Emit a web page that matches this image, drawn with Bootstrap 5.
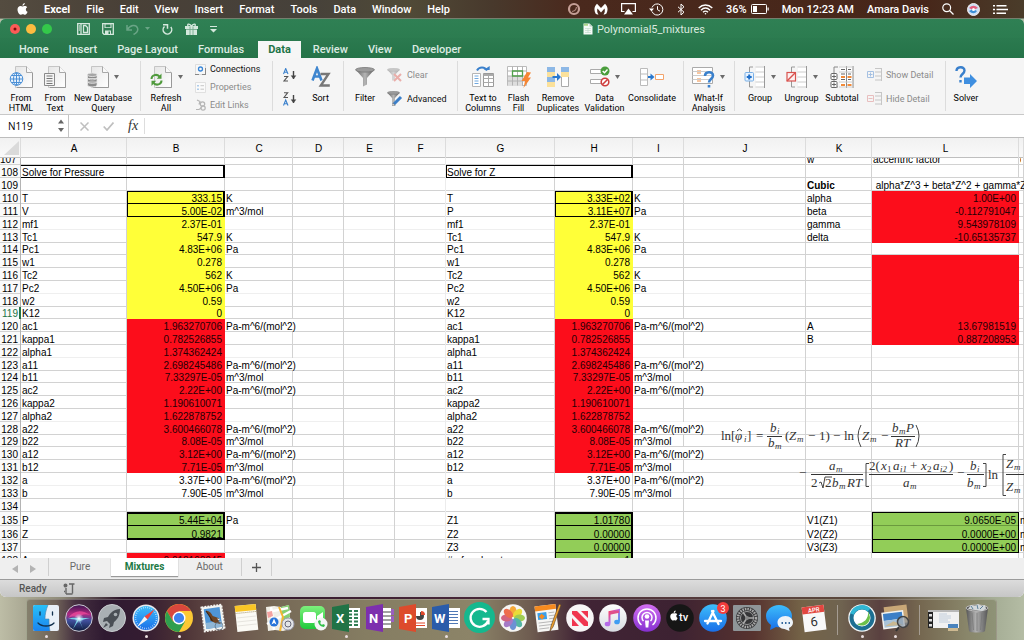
<!DOCTYPE html>
<html lang="en">
<head>
<meta charset="utf-8">
<meta name="viewport" content="width=device-width, initial-scale=1">
<title>Polynomial5_mixtures</title>
<link href="https://cdn.jsdelivr.net/npm/bootstrap@5.3.0/dist/css/bootstrap.min.css" rel="stylesheet">
<style>
:root{--ui:Roboto,Inter,sans-serif;--cell:"Liberation Sans",Arial,sans-serif}
body{font-family:var(--ui);font-size:11px;line-height:1;color:#111;background:linear-gradient(90deg,#bdbda6 0,#8e8a78 6%,#2a1227 12%,#4b2a3a 50%,#5c4a3c 85%,#a5ad95 97%,#b4bca4)}
button{font-family:inherit;border:0;background:none;padding:0;color:inherit}
svg{display:block;flex:none}
a{color:inherit;text-decoration:none}
/* menu bar */
.menubar{height:19px;color:#fff;font-weight:500;background:linear-gradient(90deg,#544c40 0,#494037 12%,#46413a 30%,#504a37 40%,#48392c 48%,#4a291d 56%,#472619 90%,#4a3c2a);padding:0 16px 0 17px;border-bottom:1px solid #75806f}
.menus{gap:16px}
.status-items{gap:13px}
/* title and ribbon tabs */
.app-window{background:#fff;border-radius:5px 5px 6px 6px;overflow:hidden;min-height:0}
.titlebar{height:19px;background:linear-gradient(#2f8054,#2c7c50);color:#d9e9df;padding-top:1px}
.quick{width:264px;padding-left:10px;gap:25px}
.lights{gap:6px}
.light{width:10px;height:10px;border-radius:50%}
.light.close-dot{background:#fc5b57}
.light.mini-dot{background:#fdbc40}
.light.zoom-dot{background:#34c84a}
.quick-icons{gap:12px}
.undo{gap:6px}
.ribbon-tabs{height:20px;background:linear-gradient(#2b7a4f,#257348);color:#dcebe2;padding-left:9px;font-weight:500}
.ribbon-tabs a{padding:0 10px;height:17px;line-height:17px}
.ribbon-tabs a.current{background:#f6f6f6;color:#217346;font-weight:700;margin:0 2px 0 4px}
/* ribbon */
.ribbon{display:grid;height:57px;background:#f5f5f5;border-bottom:1px solid #c8c8c8;padding-left:3px;font-size:9px;line-height:10px;
grid-template-columns:36px 32px 64px 10px 42px 80px 10px 26px 35px 10px 34px 70px 10px 42px 29px 50px 43px 52px 10px 41px 10px 42px 41px 40px 78px 10px 32px}
.tool{display:flex;flex-direction:column;align-items:center;padding-top:8px;text-align:center;white-space:nowrap;color:#000}
.tool .pic{display:flex;align-items:center;gap:5px;height:22px;margin-bottom:5px}
.divide{width:1px;height:50px;margin:3px auto 0;background:#dcdcdc}
.stack{display:flex;flex-direction:column;padding:2px 0 0 8px}
.stack.two{padding-top:6px;padding-left:5px}
.stack button{display:flex;align-items:center;gap:4px;height:18px;white-space:nowrap}
.stack.two button{height:21px;margin-bottom:3px}
.off{color:#8b8b8b}
.off svg{opacity:.5}
.sorts{display:flex;flex-direction:column;align-items:center;gap:10px;padding-top:10px}
/* formula bar */
.formula{height:23px;border-bottom:1px solid #bdbdbd;background:#fff}
.namebox{width:69px;border-right:1px solid #c4c4c4;gap:4px}
.namebox input{width:53px;border:0;padding:0 0 0 8px;font:10px/14px "Open Sans",sans-serif;outline:0;background:none}
.formula-buttons{gap:14px;padding:0 6px 0 11px}
.fx{font:italic 14px/16px "Liberation Serif",serif;color:#333}
.entry{border:0;outline:0;background:none;font:10px/14px var(--cell);border-left:1px solid #ddd}
/* grid */
.sheet{min-height:0;overflow:hidden;position:relative;font-family:var(--cell);font-size:10px;line-height:11px}
.cells{table-layout:fixed;border-collapse:separate;border-spacing:0;width:100%;min-width:1024px;color:#000}
.c-head{width:21px}.c-a{width:106px}.c-b{width:98px}.c-c{width:68px}.c-slim{width:51px}.c-g{width:109px}.c-h{width:78px}.c-j{width:122px}.c-k{width:66px}.c-l{width:147px}
.cells td,.cells tbody th{--t:0px;--b:0px;--l:0px;--r:0px;--gx:#d2d2d2;--gy:#d2d2d2;padding:0 3px 0 1px;height:13px;vertical-align:bottom;white-space:nowrap;font-weight:400;
box-shadow:inset 0 var(--t) #000,inset 0 calc(0px - var(--b)) #000,inset var(--l) 0 #000,inset calc(0px - var(--r)) 0 #000,inset -1px 0 var(--gx),inset 0 -1px var(--gy)}
.cells thead th{height:20px;font-weight:400;text-align:center;vertical-align:middle;padding:0;background:linear-gradient(#f1f1f1,#fafafa);box-shadow:inset -1px 0 #dcdcdc,inset 0 -1px #bfbfbf}
.cells tbody th{--gx:#b4b4b4;background:#fafafa;text-align:right;padding:0 3px 0 0}
.cells tbody th.active{color:#217346;box-shadow:inset -2px 0 #217346}
.cells tr.short>*{height:12px}
.cells tr.tall>*{height:14px}
.cells .faint td{--gy:#efefef}
.cells tr.cut>*{height:7px;overflow:hidden}
.cut div{height:7px;display:flex;align-items:flex-end;overflow:hidden}
.cells td.num{text-align:right}
.cells td:nth-child(7){--gx:#ececec}
.cells tr td.yel{background:#ffff38;--gx:#ffff38;--gy:#ffff38}
.cells tr td.red{background:#fc0d1b;--gx:#fc0d1b;--gy:#fc0d1b;color:#260004}
.cells tr td.grn{background:#92cd58;--gx:#92cd58;--gy:#92cd58}
.cells tr td.mid{--gy:#6b9a3e}
.cells td.t1{--t:1px}.cells td.t2{--t:2px}.cells td.b1{--b:1px}.cells td.b2{--b:2px}
.cells td.l1{--l:1px}.cells td.r1{--r:1px}.cells td.r2{--r:2px}
.cells td.spill{--gx:transparent}
.equation{position:absolute;left:720px;top:284px;font-family:"Liberation Serif",serif;font-size:13px;font-style:italic}
.equation .up{font-style:normal}
.equation .sub{font-size:9px}
/* sheet tabs and status */
.sheettabs{height:22px;background:#efefef;border-bottom:1px solid #9b9b9b;font-size:10px;font-weight:500;color:#6a6a6a}
.sheettabs button{height:18px}
.arrows{padding:7px 12px 0 12px;gap:12px}
.sheettabs .arrows button{height:8px}
.sheettabs .tab{width:63px;border-left:1px solid #cfcfcf}
.sheettabs .tab.current{width:67px;background:#fff;color:#1e7a46;font-weight:700;border:0;box-shadow:0 1px 1px #999}
.sheettabs .tab.last-tab{border:0}
.sheettabs .add{width:31px;border:solid #cfcfcf;border-width:0 1px}
.statusbar{height:17px;background:linear-gradient(#dcdcdc,#c6c6c6);color:#555;font-size:10px;font-weight:500;padding-left:19px}
/* dock */
.dock{height:41px;margin:2px 27px 0 26px;padding:0 2px;border:1px solid rgba(200,200,190,.35);border-bottom:0;border-radius:4px 4px 0 0;
background:linear-gradient(90deg,#85806d 0,#6f6258 3%,#453040 5%,#2f1a31 8%,#341c31 12%,#4c3236 16%,#6a544b 21%,#776a57 26%,#857d62 35%,#8c8468 46%,#6e5c50 52%,#412435 57%,#3d2232 67%,#57332f 75%,#746347 80%,#6f6350 84%,#5a4140 88%,#74664f 92%,#89866a 97%,#8e9377)}
.dock a{flex:1 1 0;min-width:0;height:39px;padding-top:4px;position:relative}
.dock a svg{margin:0 auto;overflow:visible}
.dock a.open::after{content:"";position:absolute;left:calc(50% - 1px);bottom:1px;width:3px;height:3px;border-radius:50%;background:#eadfe0}
.dock .bar{width:15px;height:30px;margin-top:5px;background:linear-gradient(90deg,transparent 7px,#a59c92 7px,#a59c92 8px,transparent 8px)}
</style>
</head>
<body class="d-flex flex-column vh-100 overflow-hidden m-0">

<svg width="0" height="0" class="position-absolute" aria-hidden="true">
  <defs>
    <linearGradient id="gPaper" x2="1" y2="1"><stop offset="0" stop-color="#e6e6e6"/><stop offset="1" stop-color="#fff"/></linearGradient>
    <linearGradient id="gFunnel"><stop offset="0" stop-color="#666"/><stop offset=".5" stop-color="#b5b5b5"/><stop offset="1" stop-color="#5a5a5a"/></linearGradient>
    <linearGradient id="gGlass" x2="0" y2="1"><stop offset="0" stop-color="#fdfdfd"/><stop offset="1" stop-color="#d9dce2"/></linearGradient>
    <linearGradient id="gBlue" x2="0" y2="1"><stop offset="0" stop-color="#3dbdfb"/><stop offset="1" stop-color="#1a6fe8"/></linearGradient>
    <linearGradient id="gGreen" x2="0" y2="1"><stop offset="0" stop-color="#7df07c"/><stop offset="1" stop-color="#1fc93b"/></linearGradient>
    <linearGradient id="gPurple" x2="0" y2="1"><stop offset="0" stop-color="#d370f2"/><stop offset="1" stop-color="#8530d0"/></linearGradient>
    <linearGradient id="gNote" x2="1" y2="1"><stop offset="0" stop-color="#fb3b62"/><stop offset=".5" stop-color="#b56be8"/><stop offset="1" stop-color="#38a7f5"/></linearGradient>
    <linearGradient id="gFinder" x2="0" y2="1"><stop offset="0" stop-color="#28c0f8"/><stop offset="1" stop-color="#1b84ee"/></linearGradient>
    <linearGradient id="gSiri" x2="0" y2="1"><stop offset="0" stop-color="#3a1450"/><stop offset=".35" stop-color="#b02a80"/><stop offset=".6" stop-color="#3f4f9c"/><stop offset="1" stop-color="#0c1a38"/></linearGradient>
    <radialGradient id="gGlow"><stop offset="0" stop-color="#fff"/><stop offset="1" stop-color="#9fe4ff" stop-opacity="0"/></radialGradient>
    <linearGradient id="gTrash"><stop offset="0" stop-color="#555"/><stop offset=".45" stop-color="#b0b0b0"/><stop offset="1" stop-color="#555"/></linearGradient>
    <symbol id="paper" viewBox="0 0 18 22"><path d="M.5.5h11l6 6v15H.5z" fill="url(#gPaper)" stroke="#c5c5c5"/><path d="M11.5.5v6h6" fill="#f9f9f9" stroke="#a8a8a8"/><path d="M17.5 7v14.500H2" fill="none" stroke="#999"/></symbol>
    <symbol id="caret" viewBox="0 0 5 4"><path d="M0 0h5L2.500 4z" fill="#6b6b6b"/></symbol>
    <symbol id="funnel" viewBox="0 0 20 20"><path d="M1 3l7 8v8.500l4-2V11l7-8z" fill="url(#gFunnel)"/><ellipse cx="10" cy="2.800" rx="9.500" ry="2.300" fill="#9b9b9b" stroke="#777" stroke-width=".8"/></symbol>
  </defs>
</svg>

<header class="menubar d-flex align-items-center flex-shrink-0">
  <nav class="menus d-flex align-items-center" aria-label="Menu bar">
    <a href="#" aria-label="Apple"><svg width="11" height="13" viewBox="0 0 11 13"><path d="M7.800 0c.1 1.300-1 2.700-2.300 2.700C5.300 1.400 6.500.2 7.800 0zM5.500 3.500c.5 0 1.200-.6 2.300-.6 1 0 1.900.5 2.400 1.300-1.900 1.100-1.700 3.800.4 4.600-.4 1.100-1.500 3-2.600 3-.8 0-1.200-.5-2.200-.5s-1.400.5-2.200.5C2.200 11.800.5 9 .5 6.600.5 4.200 2 3 3.500 3c.9 0 1.500.5 2 .5z" fill="#fff"/></svg></a>
    <a href="#" class="fw-bold">Excel</a><a href="#">File</a><a href="#">Edit</a><a href="#">View</a><a href="#">Insert</a><a href="#">Format</a><a href="#">Tools</a><a href="#">Data</a><a href="#">Window</a><a href="#">Help</a>
  </nav>
  <div class="status-items d-flex align-items-center ms-auto">
    <svg width="14" height="14" viewBox="0 0 14 14" fill="none"><circle cx="7" cy="7" r="5" stroke="#c59f96" stroke-width="2.200"/><path d="M5 9.500Q9 9 9.500 5" stroke="#a98278" stroke-width="1.200"/></svg>
    <svg width="14" height="12" viewBox="0 0 14 12"><path d="M1.500 10.500C-.5 6.500.5 3 3 .8L7 5l4-4.200c2.500 2.200 3.500 5.700 1.500 9.700-1 1-2.500 1.300-3 1 1.500-2 1.500-4 1-6L7 9.500 3.500 5.500c-.5 2-.5 4 1 6-1 .3-2.200 0-3-1z" fill="#fff"/></svg>
    <svg width="15" height="12" viewBox="0 0 15 12"><path d="M3.500 8.500H.6V.6h13.800v7.900h-2.900" fill="none" stroke="#fff" stroke-width="1.200"/><path d="M7.500 5.500L12 11.500H3z" fill="#fff"/></svg>
    <svg width="15" height="13" viewBox="0 0 15 13" fill="none" stroke="#fff"><path d="M3 8.500A5.600 5.600 0 1 0 3 4.500" /><path d="M8.500 3.200v3.500l2.500 1.500"/><path d="M0 5.500h5L2.500 8.500z" fill="#fff" stroke="none"/></svg>
    <svg width="8" height="13" viewBox="0 0 8 13" fill="none" stroke="#fff"><path d="M1 3.800l6 5.400L4 12V1l3 2.800L1 9.200"/></svg>
    <svg width="15" height="11" viewBox="0 0 15 11" fill="none" stroke="#fff" stroke-width="1.400"><path d="M.7 3.900c4-3.900 9.600-3.900 13.600 0M2.900 6.200c2.800-2.600 6.400-2.600 9.200 0M5 8.300c1.500-1.400 3.500-1.400 5 0"/><circle cx="7.500" cy="9.800" r=".8" fill="#fff" stroke="none"/></svg>
    <div class="d-flex align-items-center gap-1"><span>36%</span>
    <svg width="18" height="10" viewBox="0 0 18 10"><rect x=".5" y=".5" width="15" height="9" rx="1" fill="none" stroke="#fff"/><path d="M2 2h4v6H2zM16.500 3.500h1.200v3h-1.200z" fill="#fff"/></svg></div>
    <span>Mon 12:23 AM</span><span>Amara Davis</span>
    <svg width="12" height="12" viewBox="0 0 12 12" fill="none" stroke="#fff" stroke-width="1.200"><circle cx="4.700" cy="4.700" r="3.900"/><path d="M7.500 7.500l4 4"/></svg>
    <svg width="13" height="13" viewBox="0 0 13 13"><circle cx="6.500" cy="6.500" r="6" fill="#cfe1f5" stroke="#f0e8ea"/><path d="M2 5c3-3 6-3 9 0L6 7z" fill="#e5607f"/><path d="M2 8c3 3 6 3 8 0L6 6z" fill="#3d8fd8"/><circle cx="6.500" cy="6.500" r="1.500" fill="#fff"/></svg>
    <svg width="15" height="9" viewBox="0 0 15 9"><path d="M0 0h2v1.500H0zM3.500 0h10v1.500h-10zM0 3.700h2v1.500H0zM3.500 3.700H15v1.500H3.500zM0 7.400h2v1.500H0zM3.500 7.400H13v1.500H3.500z" fill="#fff"/></svg>
  </div>
</header>

<main class="app-window d-flex flex-column flex-grow-1">
  <div class="titlebar d-flex align-items-center flex-shrink-0">
    <div class="quick d-flex align-items-center flex-shrink-0">
      <div class="lights d-flex">
        <button class="light close-dot" aria-label="Close"><svg width="10" height="10"><circle cx="5" cy="5" r="1.500" fill="#7a0c0c"/></svg></button>
        <button class="light mini-dot" aria-label="Minimise"></button>
        <button class="light zoom-dot" aria-label="Zoom"></button>
      </div>
      <div class="quick-icons d-flex align-items-center">
        <svg width="13" height="12" viewBox="0 0 13 12" fill="none" stroke="#d5e8dd" stroke-width="1.300"><path d="M.7.7h11.600v10.600H.7zM4 1v10"/><path d="M1.800 3h1M1.800 5h1M1.800 7h1" /><path d="M6.500 2.500h2L10.500 4.500v5h-4z"/></svg>
        <svg width="12" height="12" viewBox="0 0 12 12"><path d="M.7.7h10.600v10.600H2L.7 10z" fill="none" stroke="#d5e8dd" stroke-width="1.300"/><path d="M3 7.500h6V11H3zM2.500 1h7v4h-7z" fill="#d5e8dd"/><path d="M3.500 1.500h5v2.800h-5zM6.500 8.500H8V11H6.500z" fill="#2d7d52"/></svg>
        <div class="undo d-flex align-items-center"><svg width="13" height="11" viewBox="0 0 13 11" fill="none" stroke="#6aa586" stroke-width="1.500"><path d="M1 1v5h5M1.500 5.500C4 1 10 0 11.500 4c1 3-1 5-4 6.500"/></svg><svg width="5" height="4" viewBox="0 0 5 4"><path d="M0 0h5L2.500 3z" fill="#6aa586"/></svg></div>
        <svg width="11" height="12" viewBox="0 0 11 12" fill="none" stroke="#d5e8dd" stroke-width="1.500"><path d="M2.500 3.500A4.300 4.300 0 1 0 8.800 4M1 1.800h4.500v4"/></svg>
        <svg width="13" height="12" viewBox="0 0 13 12"><path d="M0 3h13v3H0zM1 6.500h11V12H1z" fill="#d5e8dd"/><path d="M3 3C2 1 4 0 6.500 3 9 0 11 1 10 3" fill="none" stroke="#d5e8dd" stroke-width="1.400"/><path d="M5 3.500V12M8 3.500V12" stroke="#68a384" stroke-width=".8"/></svg>
        <svg width="7" height="7" viewBox="0 0 7 7"><path d="M0 0h7v1H0zM0 3h7L3.500 6.500z" fill="#d5e8dd"/></svg>
      </div>
    </div>
    <div class="flex-grow-1 d-flex justify-content-center align-items-center gap-1">
      <svg width="10" height="12" viewBox="0 0 10 12"><path d="M.5.5h6l3 3v8h-9z" fill="#f5faf7"/><path d="M6.500.5v3h3" fill="#b8cfc2"/><path d="M2 5.500h6M2 7.500h6M2 9.500h6M5 5v5" stroke="#c3dccf" stroke-width=".7"/><path d="M1 .8h4v2H1z" fill="#a9d58a"/></svg>
      <span>Polynomial5_mixtures</span>
    </div>
  </div>
  <nav class="ribbon-tabs d-flex align-items-end flex-shrink-0" aria-label="Ribbon tabs">
    <a href="#">Home</a><a href="#">Insert</a><a href="#">Page Layout</a><a href="#">Formulas</a><a href="#" class="current" aria-current="page">Data</a><a href="#">Review</a><a href="#">View</a><a href="#">Developer</a>
  </nav>

  <div class="ribbon flex-shrink-0" role="toolbar" aria-label="Data">
    <button class="tool"><span class="pic"><svg width="24" height="22"><use href="#paper" x="6" width="18" height="22"/><g fill="#eaf3fc" stroke="#4a8fd6"><circle cx="7.500" cy="13" r="6.300"/><ellipse cx="7.500" cy="13" rx="3" ry="6.300" fill="none"/><path d="M1.200 13h12.600M2.500 9.500h10M2.500 16.500h10M7.500 6.700v12.600" fill="none"/></g></svg></span>From<br>HTML</button>
    <button class="tool"><span class="pic"><svg width="22" height="22"><use href="#paper" x="4" width="18" height="22"/><path d="M.5 7.500h10v12H.5z" fill="#f4f4f4" stroke="#8b8b8b"/><path d="M2.500 10h6M2.500 12.500h6M2.500 15h6M2.500 17.500h6" stroke="#777"/></svg></span>From<br>Text</button>
    <button class="tool"><span class="pic"><svg width="22" height="22"><use href="#paper" x="4" width="18" height="22"/><g fill="#8a8a8a" stroke="#e9e9e9" stroke-width=".8"><path d="M.5 16v3c0 2.500 9.500 2.500 9.500 0v-3zM.5 12.500v3c0 2.500 9.500 2.500 9.500 0v-3zM.5 9v3c0 2.500 9.500 2.500 9.500 0V9z"/><ellipse cx="5.200" cy="8.800" rx="4.800" ry="1.800" fill="#a5a5a5"/></g></svg><svg width="5" height="4"><use href="#caret"/></svg></span>New Database<br>Query</button>
    <i class="divide"></i>
    <button class="tool"><span class="pic"><svg width="23" height="22"><use href="#paper" x="4" width="18" height="22"/><g fill="none" stroke="#4f9a3c" stroke-width="2"><path d="M1.500 13c0-4 5-5.500 8-2.500"/><path d="M11.500 14.500c0 4-5 5.500-8 2.500"/></g><path d="M11.500 7.500v5.300H6.800zM1.500 20v-5.300h4.700z" fill="#4f9a3c"/></svg><svg width="5" height="4"><use href="#caret"/></svg></span>Refresh<br>All</button>
    <div class="stack">
      <button><svg width="11" height="11" viewBox="0 0 11 11"><path d="M.5.500h10v10H.5z" fill="#f7f7f7" stroke="#ddd"/><circle cx="5.500" cy="5" r="2" fill="none" stroke="#3a87d8" stroke-width="1.300"/><path d="M0 10.500h4M7 10.500h4M10.500 4v6" stroke="#888"/></svg>Connections</button>
      <button class="off"><svg width="11" height="11" viewBox="0 0 11 11"><path d="M.5.500h10v10H.5z" fill="#fff" stroke="#ccc"/><path d="M2 3h2v1.500H2zM2 6.500h2V8H2z" fill="#6aa5e0"/><path d="M5.500 3.700H9M5.500 7.200H9" stroke="#999"/></svg>Properties</button>
      <button class="off"><svg width="11" height="12" viewBox="0 0 11 12" fill="none" stroke="#777" stroke-width="1.200"><path d="M2 1l3 1.500-1 3M1 10.500h3l3-2"/><circle cx="7.500" cy="5" r="2.200"/><circle cx="8" cy="9" r="2.200"/></svg>Edit Links</button>
    </div>
    <i class="divide"></i>
    <div class="sorts">
      <button aria-label="Sort ascending"><svg width="14" height="14" viewBox="0 0 14 14" fill="none" stroke-width="1.100"><path d="M.5 6L2.700.5 5 6M1.300 4.200h2.900" stroke="#3a80cc"/><path d="M1 8.500h3.700L1 13h4" stroke="#555"/><path d="M10.500 3v8" stroke="#444" stroke-width="1.400"/><path d="M7.700 7.500h5.600L10.500 11z" fill="#444"/></svg></button>
      <button aria-label="Sort descending"><svg width="14" height="14" viewBox="0 0 14 14" fill="none" stroke-width="1.100"><path d="M1 .7h3.700L1 5.500h4" stroke="#555"/><path d="M.5 13.500L2.700 8 5 13.500M1.300 11.700h2.900" stroke="#3a80cc"/><path d="M10.500 3v8" stroke="#444" stroke-width="1.400"/><path d="M7.700 7.500h5.600L10.500 11z" fill="#444"/></svg></button>
    </div>
    <button class="tool"><span class="pic"><svg width="20" height="22" viewBox="0 0 20 22" fill="none"><path d="M1.500 14.500L6 2.500l4.500 12M3 10.500h6" stroke="#3f86cf" stroke-width="2.600"/><path d="M9.500 8h8L9.800 19.500h9" stroke="#777" stroke-width="2.400"/></svg></span>Sort</button>
    <i class="divide"></i>
    <button class="tool"><span class="pic"><svg width="20" height="22"><use href="#funnel" y="1" width="20" height="20"/></svg></span>Filter</button>
    <div class="stack two">
      <button class="off"><svg width="16" height="14"><use href="#funnel" width="13" height="13"/><path d="M7 6l7 7M14 6l-7 7" stroke="#e06a62" stroke-width="2"/></svg>Clear</button>
      <button><svg width="16" height="15"><use href="#funnel" width="13" height="13"/><path d="M6.500 13.500L14 6" stroke="#3c7fc8" stroke-width="3"/><path d="M5.500 15l.5-3 2.300 2.200z" fill="#ddd" stroke="#666" stroke-width=".5"/></svg>Advanced</button>
    </div>
    <i class="divide"></i>
    <button class="tool"><span class="pic"><svg width="24" height="22" viewBox="0 0 24 22"><path d="M6 4.500c2-4 8-4 10 0" fill="none" stroke="#3a80cc" stroke-width="2"/><path d="M12.500 4h6.200v-4z" fill="#3a80cc"/><path d="M1.500 7.500h8v13h-8z" fill="#fff" stroke="#b5b5b5"/><path d="M3.500 10h4M3.500 12.500h4M3.500 15h4M3.500 17.500h4" stroke="#6fa8e0"/><path d="M12.500 7.500h10v13h-10z" fill="#fff" stroke="#9a9a9a"/><path d="M12.500 8h10v2h-10z" fill="#aaa"/><path d="M17.500 8v12M12.500 12.500h10M12.500 16.500h10" stroke="#aaa"/></svg></span>Text to<br>Columns</button>
    <button class="tool"><span class="pic"><svg width="24" height="22" viewBox="0 0 24 22"><path d="M.5.500h19v19H.5z" fill="#fff" stroke="#bbb"/><path d="M1 10h14v10H1z" fill="#ddd"/><path d="M5.500.5v19M10.500.5v19M15.500.5v19M.5 5h19M.5 10h19M.5 15h19" stroke="#b2b2b2"/><path d="M5.500 5h10v5h-10z" fill="none" stroke="#4fa04a" stroke-width="1.300"/><path d="M20 6l4 .5-3 5h3L16.500 22l1.500-7h-3.500z" fill="#f58634"/></svg></span>Flash<br>Fill</button>
    <button class="tool"><span class="pic"><svg width="24" height="22" viewBox="0 0 24 22"><path d="M1.500 1.500h7v19h-7zM15.500 1.500h7v19h-7z" fill="#fff" stroke="#aaa"/><path d="M1 1h8v5H1zM1 11h8v5H1zM15 1h8v5h-8z" fill="#8db8e6"/><path d="M1 6h8v5H1zM1 16h8v5H1zM15 6h8v5h-8z" fill="#fbe19b"/><path d="M6.500 11H14" stroke="#2878cf" stroke-width="2"/><path d="M11 7l4 4-4 4z" fill="#2878cf"/></svg></span>Remove<br>Duplicates</button>
    <button class="tool"><span class="pic"><svg width="20" height="22" viewBox="0 0 20 22"><path d="M.5 3.500h13v4H.5zM.5 13.500h13v4H.5z" fill="#fff" stroke="#aaa"/><circle cx="15" cy="5" r="4.500" fill="#4a9e3c"/><path d="M12.700 5l1.800 1.800 3-3.300" fill="none" stroke="#fff" stroke-width="1.400"/><circle cx="15" cy="16" r="3.800" fill="#fff" stroke="#cf3d3d" stroke-width="1.600"/><path d="M12.500 18.500l5-5" stroke="#cf3d3d" stroke-width="1.600"/></svg><svg width="5" height="4"><use href="#caret"/></svg></span>Data<br>Validation</button>
    <button class="tool"><span class="pic"><svg width="24" height="22" viewBox="0 0 24 22"><path d="M.5 2.500h7v17h-7zM.5 8h7M.5 14h7" fill="#fff" stroke="#bbb"/><path d="M8 11h4" stroke="#2878cf" stroke-width="2"/><path d="M10.500 7.500L14.500 11l-4 3.500z" fill="#2878cf"/><path d="M15.500 8.500h8v5h-8z" fill="#fff" stroke="#f3a46c"/></svg></span>Consolidate</button>
    <i class="divide"></i>
    <button class="tool"><span class="pic"><svg width="23" height="22" viewBox="0 0 23 22"><path d="M.5 1.500h20v16H.5z" fill="#fff" stroke="#aaa"/><path d="M5 4h4v4H5zM5 12h4v4H5z" fill="#f8c6a0"/><path d="M.5 5.500h20M.5 9.500h20M.5 13.500h20" stroke="#ccc"/><path d="M13 10c0-5 8-5 8-.5 0 3.500-4 3.500-4 7M17 19v2.500" fill="none" stroke="#3a80cc" stroke-width="2.600"/></svg><svg width="5" height="4"><use href="#caret"/></svg></span>What-If<br>Analysis</button>
    <i class="divide"></i>
    <button class="tool"><span class="pic"><svg width="22" height="22" viewBox="0 0 22 22"><path d="M9 1H5.500v20H9" fill="none" stroke="#999"/><path d="M12 .500h9v21h-9z" fill="#fff"/><path d="M11.500 1h9M11.500 6h9M11.500 11h9M11.500 16h9M11.500 21h9" stroke="#ccc"/><path d="M20.500 0v22" stroke="#999"/><rect x="1" y="6.500" width="8.500" height="8.500" rx="1" fill="#e9f3fd" stroke="#79b0e8"/><path d="M5.200 8.500v5M2.700 11h5" stroke="#2070cc" stroke-width="2"/></svg><svg width="5" height="4"><use href="#caret"/></svg></span>Group</button>
    <button class="tool"><span class="pic"><svg width="22" height="22" viewBox="0 0 22 22"><path d="M9 1H5.500v20H9" fill="none" stroke="#999"/><path d="M12 .500h9v21h-9z" fill="#fff"/><path d="M11.500 1h9M11.500 6h9M11.500 11h9M11.500 16h9M11.500 21h9" stroke="#ccc"/><path d="M20.500 0v22" stroke="#999"/><rect x="1" y="6.500" width="8.500" height="8.500" fill="#fdf0f0" stroke="#d9534f" stroke-width="1.200"/><path d="M1 15l8.500-8.500" stroke="#d9534f" stroke-width="1.500"/></svg><svg width="5" height="4"><use href="#caret"/></svg></span>Ungroup</button>
    <button class="tool"><span class="pic"><svg width="24" height="22" viewBox="0 0 24 22"><path d="M8 1H4v20h4" fill="none" stroke="#888"/><path d="M10 .500h13v21H10z" fill="#fff"/><path d="M23 0v22M16.500 0v22" stroke="#888"/><path d="M9 1h14M9 6h14M9 16h14M9 21h14" stroke="#ccc"/><path d="M11 3.500h4M18 3.500h3M11 8h4M18 8h3M11 13.500h4M18 13.500h3" stroke="#666"/><path d="M11 10h4v2h-4zM17.500 10h4v2h-4zM11 18h4v2h-4zM17.500 18h4v2h-4z" fill="#f28b3a"/><g fill="#fff" stroke="#666"><rect x="1" y="7.500" width="6" height="6" rx="1"/><rect x="1" y="15.500" width="6" height="6" rx="1"/><path d="M4 8.500v4M2 10.500h4M4 16.500v4M2 18.500h4"/></g></svg></span>Subtotal</button>
    <div class="stack two">
      <button class="off"><svg width="15" height="13" viewBox="0 0 15 13"><path d="M8 .5h7M8 4h7M8 8h7M8 12h7M14.500 0v13" stroke="#999"/><path d="M.5 3.500h6v6h-6zM3.500 4.500v4M1.500 6.500h4" fill="none" stroke="#5a8fd0"/></svg>Show Detail</button>
      <button class="off"><svg width="15" height="13" viewBox="0 0 15 13"><path d="M8 .5h7M8 4h7M8 8h7M8 12h7M14.500 0v13" stroke="#999"/><path d="M.5 3.500h6v6h-6zM1.500 6.500h4" fill="none" stroke="#d88"/></svg>Hide Detail</button>
    </div>
    <i class="divide"></i>
    <button class="tool"><span class="pic"><svg width="22" height="22" viewBox="0 0 22 22"><path d="M1.500 5c0-5 8-5 8-.5 0 3.500-4 3.500-4 7M5.500 14v2.600" fill="none" stroke="#3a80cc" stroke-width="2.400"/><path d="M9 11.500h6V8l7 7-7 7v-4H9z" fill="#3f8fe0"/></svg></span>Solver</button>
  </div>

  <div class="formula d-flex align-items-center flex-shrink-0">
    <div class="namebox d-flex align-items-center h-100">
      <input type="text" value="N119" aria-label="Name box">
      <svg width="8" height="16" viewBox="0 0 8 16"><path d="M1 5.500h6L4 1.500zM1 10h6l-3 4z" fill="#666"/></svg>
    </div>
    <div class="formula-buttons d-flex align-items-center">
      <button aria-label="Cancel"><svg width="9" height="9" viewBox="0 0 9 9"><path d="M.5.500l8 8M8.500.5l-8 8" stroke="#bfbfbf" stroke-width="1.500"/></svg></button>
      <button aria-label="Enter"><svg width="11" height="9" viewBox="0 0 11 9"><path d="M.7 4.500L4 8l6.500-7.500" fill="none" stroke="#bfbfbf" stroke-width="1.700"/></svg></button>
      <button class="fx" aria-label="Insert function">fx</button>
    </div>
    <input class="entry flex-grow-1" type="text" aria-label="Formula">
  </div>

  <section class="sheet flex-grow-1" aria-label="Sheet">
    <table class="cells">
      <colgroup><col class="c-head"><col class="c-a"><col class="c-b"><col class="c-c"><col class="c-slim"><col class="c-slim"><col class="c-slim"><col class="c-g"><col class="c-h"><col class="c-slim"><col class="c-j"><col class="c-k"><col class="c-l"><col></colgroup>
      <thead><tr><th aria-label="Select all"><svg width="21" height="20"><path d="M19 3v14H4z" fill="#dadada"/></svg></th><th>A</th><th>B</th><th>C</th><th>D</th><th>E</th><th>F</th><th>G</th><th>H</th><th>I</th><th>J</th><th>K</th><th>L</th><th></th></tr></thead>
      <tbody id="rows"></tbody>
    </table>
    <svg class="equation" width="304" height="76" viewBox="0 0 304 76" fill="#333" role="img" aria-label="Fugacity coefficient equation">
      <text x="1" y="18" class="up">ln[</text><text x="15" y="18">φ</text><text x="24" y="20" class="sub">i</text><text x="27" y="18" class="up">]</text><text x="36" y="18" class="up">=</text>
      <text x="50" y="10">b</text><text x="57" y="12" class="sub">i</text><text x="48" y="25">b</text><text x="55" y="27" class="sub">m</text>
      <text x="65" y="18" class="up">(</text><text x="69" y="18">Z</text><text x="77" y="20" class="sub">m</text><text x="88" y="18" class="up">−</text><text x="99" y="18" class="up">1)</text><text x="113" y="18" class="up">−</text><text x="124" y="18" class="up">ln</text>
      <text x="142" y="18">Z</text><text x="150" y="20" class="sub">m</text><text x="161" y="18" class="up">−</text>
      <text x="172" y="10">b</text><text x="179" y="12" class="sub">m</text><text x="186" y="10">P</text><text x="175" y="25">RT</text>
      <text x="79" y="55" class="up">−</text><text x="109" y="48">a</text><text x="116" y="50" class="sub">m</text>
      <text x="91" y="65" class="up">2</text><text x="105" y="65" class="up">2</text><text x="112" y="65">b</text><text x="119" y="67" class="sub">m</text><text x="127" y="65">RT</text>
      <text x="149" y="48" class="up">2(</text><text x="161" y="48">x</text><text x="167" y="50" class="sub up">1</text><text x="173" y="48">a</text><text x="180" y="50" class="sub">i1</text><text x="190" y="48" class="up">+</text><text x="201" y="48">x</text><text x="207" y="50" class="sub up">2</text><text x="213" y="48">a</text><text x="220" y="50" class="sub">i2</text><text x="229" y="48" class="up">)</text>
      <text x="183" y="65">a</text><text x="190" y="67" class="sub">m</text><text x="237" y="55" class="up">−</text>
      <text x="250" y="48">b</text><text x="257" y="50" class="sub">i</text><text x="247" y="65">b</text><text x="254" y="67" class="sub">m</text><text x="268" y="57" class="up">ln</text>
      <text x="286" y="46">Z</text><text x="294" y="48" class="sub">m</text><text x="286" y="69">Z</text><text x="294" y="71" class="sub">m</text>
      <g fill="none" stroke="#333"><path d="M47 14.500h15M171 14.500h24M91 52.500h52M149 52.500h84M247 52.500h17M286 52.500h18"/><path d="M141 3q-6 11 0 22M196 3q6 11 0 22M149 41.500h-3v23h3M263 41.500h3v23h-3M286 32.500h-3v41h3M99 61l2-1 2 6 2-11h7M17 9l2.500-2L22 9" stroke="#444"/></g>
    </svg>
  </section>

  <div class="sheettabs d-flex align-items-start flex-shrink-0">
    <div class="arrows d-flex align-items-center"><button aria-label="Previous sheet"><svg width="6" height="8"><path d="M6 0v8L0 4z" fill="#b3b3b3"/></svg></button><button aria-label="Next sheet"><svg width="6" height="8"><path d="M0 0v8l6-4z" fill="#b3b3b3"/></svg></button></div>
    <button class="tab">Pure</button><button class="tab current">Mixtures</button><button class="tab last-tab">About</button><button class="add" aria-label="Add sheet"><svg width="9" height="9" class="mx-auto"><path d="M4.500 0v9M0 4.500h9" stroke="#555" stroke-width="1.300"/></svg></button>
  </div>
  <div class="statusbar d-flex align-items-center flex-shrink-0"><span class="me-3">Ready</span><svg width="12" height="12" viewBox="0 0 12 12" fill="none" stroke="#666" stroke-width="1.400"><path d="M6 1h5.500M9.500 1v9.500M3 11h6.500M3 5v6M1 8.500h1"/><circle cx="2.500" cy="2.500" r="1.300" fill="#666"/></svg></div>
</main>

<nav class="dock d-flex flex-shrink-0" aria-label="Dock">
  <a href="#" class="open" aria-label="Finder"><svg width="28" height="28" viewBox="0 0 28 28"><rect x="1" y="1" width="26" height="26" rx="2" fill="#e9f0f7"/><path d="M3 1h13c-2 5-3 9-3 14h4c0 4 0 8 1 12H3a2 2 0 0 1-2-2V3a2 2 0 0 1 2-2z" fill="url(#gFinder)"/><path d="M16 1c-2 5-3 9-3 14h4c0 4 0 8 1 12" fill="none" stroke="#4d86ad" stroke-width=".6"/><path d="M8 8v3M20.500 8v3M6 19c4 4 12 4 16 0" fill="none" stroke="#12304d" stroke-width="1.300" stroke-linecap="round"/></svg></a>
  <a href="#" aria-label="Siri"><svg width="28" height="28" viewBox="0 0 28 28"><circle cx="14" cy="14" r="13.300" fill="url(#gSiri)" stroke="#c9c9d4"/><path d="M3 14c6-8 14-9 22-3-6-2-10 0-11 4-3-3-6-3-11-1z" fill="#f04a9c" opacity=".75"/><path d="M3 15c5-2 8-1 11-1l11 0c-5 1-8 2-10 3l3 8-4-9-6 9 4-9c-3-1-6-1-9-1z" fill="#7fe9f5" opacity=".85"/><circle cx="14" cy="14.500" r="5" fill="url(#gGlow)"/></svg></a>
  <a href="#" aria-label="Launchpad"><svg width="28" height="28" viewBox="0 0 28 28"><circle cx="14" cy="14" r="13.500" fill="#a9afb3" stroke="#c9cdd0"/><path d="M22 5c-6 0-10 4-12 8l-4 1-1 4 4-1 3 3-1 4 4-2 1-4c3-2 6-6 6-13z" fill="#4a4f55"/><circle cx="17.500" cy="10.500" r="1.800" fill="#a9afb3"/><path d="M8 19l-3 5 5-3z" fill="#4a4f55"/></svg></a>
  <a href="#" class="open" aria-label="Safari"><svg width="28" height="28" viewBox="0 0 28 28"><circle cx="14" cy="14" r="13.500" fill="#e9eaee"/><circle cx="14" cy="14" r="12" fill="url(#gBlue)"/><circle cx="14" cy="14" r="10.500" fill="none" stroke="#dff1ff" stroke-width="1.500" stroke-dasharray=".6 1.600"/><path d="M23 5l-7.500 10.500-3-3z" fill="#f0443c"/><path d="M5 23l7.500-10.500 3 3z" fill="#f4f4f4"/></svg></a>
  <a href="#" class="open" aria-label="Chrome"><svg width="28" height="28" viewBox="0 0 28 28"><circle cx="14" cy="14" r="14" fill="#fcc934"/><path d="M14 7h12.100A14 14 0 0 0 1.900 7L8 17.500z" fill="#d9473c"/><path d="M1.900 7A14 14 0 0 0 14 28l6-10.500-12 0z" fill="#2f9e4f"/><circle cx="14" cy="14" r="6.500" fill="#fff"/><circle cx="14" cy="14" r="5.100" fill="#3f82ee"/></svg></a>
  <a href="#" aria-label="Mail"><svg width="28" height="28" viewBox="0 0 28 28"><g transform="rotate(-8 14 14)"><path d="M4 2h20v24H4z" fill="#f4f4f1" stroke="#f4f4f1" stroke-width="2" stroke-dasharray="2 1"/><path d="M6 4h16v20H6z" fill="#4f95d6"/><path d="M6 18h16v6H6z" fill="#8fb6d6"/><path d="M8 6c3 0 5 3 6 6l6 3-1 3 2 3-6-2-4-3 0-4z" fill="#6d4424"/><path d="M8 6l3 6 2 5" stroke="#3a2411" fill="none"/><path d="M18 15l3 1-2 1z" fill="#eee"/></g><circle cx="20" cy="22" r="4" fill="none" stroke="#566a80" stroke-width=".7"/></svg></a>
  <a href="#" aria-label="Notes"><svg width="28" height="28" viewBox="0 0 28 28"><g transform="rotate(-6 14 14)"><path d="M4 1h21v26H4z" fill="#fbfaf5"/><path d="M4 1h21v6H4z" fill="#fac626"/><path d="M4 8.500h21" stroke="#a3936a" stroke-dasharray="1 1"/><path d="M5 13h19M5 17h19M5 21h19" stroke="#e6e4de"/></g></svg></a>
  <a href="#" aria-label="Maps"><svg width="28" height="28" viewBox="0 0 28 28"><path d="M1 3l8-1 7 1 8-2 2 24-8 2-8-1-7 1z" fill="#f0eee6"/><path d="M16 3l8-2 1 12-8 5z" fill="#86cf72"/><path d="M3 8l20-4M6 3l3 23M2 20l24-13" stroke="#fff" stroke-width="2.500"/><path d="M2 8l5-1 1 5-5 2z" fill="#f3a2a0"/><path d="M14 3l4 10-3 14" stroke="#f2b632" stroke-width="2" fill="none"/><circle cx="9" cy="18" r="4.500" fill="#2673d9"/><path d="M9 14.500l2.500 6L9 19l-2.500 1.500z" fill="#fff"/><circle cx="23" cy="20" r="6" fill="#e3e5e8" stroke="#99a"/><circle cx="23" cy="20" r="3" fill="none" stroke="#667"/></svg></a>
  <a href="#" aria-label="FaceTime"><svg width="28" height="28" viewBox="0 0 28 28"><rect x="1" y="2" width="25" height="23" rx="5" fill="url(#gGreen)"/><rect x="4" y="8" width="13" height="11" rx="2.500" fill="#fff"/><path d="M18 12l6-4v11l-6-4z" fill="#fff"/><circle cx="22" cy="20" r="6.500" fill="#f4f5f5"/><path d="M19 17c0 3 3 6 6 6l1-2-2-1-1 1-2-2 1-1-1-2z" fill="#31c048"/></svg></a>
  <a href="#" class="open" aria-label="Excel"><svg width="28" height="28" viewBox="0 0 28 28"><path d="M13 4h15v20H13z" fill="#fff"/><path d="M16 7h4M16 10.500h4M16 14h4M16 17.500h4M16 21h4M22 7h4M22 10.500h4M22 14h4M22 17.500h4M22 21h4" stroke="#2f7d52" stroke-width="2"/><path d="M0 3l17-3v28L0 25z" fill="#217346"/><text x="4" y="19" font-size="13" font-weight="700" fill="#fff">X</text></svg></a>
  <a href="#" aria-label="OneNote"><svg width="28" height="28" viewBox="0 0 28 28"><path d="M13 4h12v20H13z" fill="#fff"/><path d="M17 8h8M17 12h8M17 16h8M17 20h8" stroke="#444"/><path d="M25 5h3v6h-3zM25 12h3v6h-3z" fill="#9a5fc0"/><path d="M0 3l17-3v28L0 25z" fill="#7d2fae"/><text x="3" y="19" font-size="13" font-weight="700" fill="#fff">N</text></svg></a>
  <a href="#" aria-label="PowerPoint"><svg width="28" height="28" viewBox="0 0 28 28"><path d="M13 4h15v20H13z" fill="#fff"/><path d="M21 8a4 4 0 1 1-4 4h4z" fill="#444"/><path d="M22 7a4 4 0 0 1 4 4h-4z" fill="#e04a2e"/><path d="M17 19h9M17 21.500h9" stroke="#e04a2e"/><path d="M0 3l17-3v28L0 25z" fill="#dd4b2c"/><text x="5" y="19" font-size="13" font-weight="700" fill="#fff">P</text></svg></a>
  <a href="#" class="open" aria-label="Word"><svg width="28" height="28" viewBox="0 0 28 28"><path d="M13 4h15v20H13z" fill="#fff"/><path d="M17 7.500h9M17 10.500h9M17 13.500h9M17 16.500h9M17 19.500h9" stroke="#4f78b5" stroke-width="1.200"/><path d="M0 3l17-3v28L0 25z" fill="#2a5caa"/><text x="2" y="19" font-size="13" font-weight="700" fill="#fff">W</text></svg></a>
  <a href="#" aria-label="Grammarly"><svg width="31" height="31" viewBox="0 0 31 31"><circle cx="15.500" cy="13.500" r="15.500" fill="#15b88e"/><path d="M22.500 8A9 9 0 1 0 24 17M24.500 20.500v-5.500h-6" fill="none" stroke="#fff" stroke-width="2.300"/></svg></a>
  <a href="#" aria-label="Photos"><svg width="28" height="28" viewBox="0 0 28 28"><circle cx="14" cy="14" r="13.800" fill="#f6f6f4"/><g opacity=".88"><ellipse cx="14" cy="7.500" rx="3.500" ry="5.500" fill="#f7a020"/><ellipse cx="14" cy="7.500" rx="3.500" ry="5.500" fill="#e8d920" transform="rotate(45 14 14)"/><ellipse cx="14" cy="7.500" rx="3.500" ry="5.500" fill="#92c83d" transform="rotate(90 14 14)"/><ellipse cx="14" cy="7.500" rx="3.500" ry="5.500" fill="#3fae9a" transform="rotate(135 14 14)"/><ellipse cx="14" cy="7.500" rx="3.500" ry="5.500" fill="#5a84d0" transform="rotate(180 14 14)"/><ellipse cx="14" cy="7.500" rx="3.500" ry="5.500" fill="#9a6bc0" transform="rotate(225 14 14)"/><ellipse cx="14" cy="7.500" rx="3.500" ry="5.500" fill="#d0506f" transform="rotate(270 14 14)"/><ellipse cx="14" cy="7.500" rx="3.500" ry="5.500" fill="#ed5b35" transform="rotate(315 14 14)"/></g></svg></a>
  <a href="#" aria-label="Pages"><svg width="28" height="28" viewBox="0 0 28 28"><g transform="rotate(-7 14 14)"><path d="M3 1h21v26H3z" fill="#f6f6f4"/><path d="M3 1h21v5H3z" fill="#f58a1f"/><path d="M5 8h9v7H5z" fill="#3b9fe8"/><path d="M9 9l3 3-3 3-3-3z" fill="#f58a1f"/><path d="M16 9h6M16 12h6M16 15h6M5 18h16M5 21h16M5 24h10" stroke="#aaa" stroke-width=".8"/></g><path d="M26 0l-8 22-1 5 3-4L28 1z" fill="#f0a02c" stroke="#54402a" stroke-width=".6"/></svg></a>
  <a href="#" aria-label="News"><svg width="28" height="28" viewBox="0 0 28 28"><circle cx="14" cy="14" r="13.800" fill="#f7f5f6"/><path d="M6 7h5l11 11v4h-4L6 10z" fill="#f0354f"/><path d="M15 7h7v7zM6 14v8h7z" fill="#f0354f"/></svg></a>
  <a href="#" aria-label="Music"><svg width="28" height="28" viewBox="0 0 28 28"><circle cx="14" cy="14" r="13.800" fill="url(#gGlass)"/><path d="M10.500 19.500V8l9.500-2v11.500" fill="none" stroke="url(#gNote)" stroke-width="2"/><path d="M10.500 9.500L20 7.500" stroke="#e0508a" stroke-width="2.500"/><ellipse cx="8.500" cy="20" rx="2.800" ry="2.300" fill="#b56be8"/><ellipse cx="18" cy="18" rx="2.800" ry="2.300" fill="#3f9df2"/></svg></a>
  <a href="#" aria-label="Podcasts"><svg width="28" height="28" viewBox="0 0 28 28"><circle cx="14" cy="14" r="13.800" fill="url(#gPurple)"/><g fill="none" stroke="#fff" stroke-width="1.500"><path d="M8.500 21a9 9 0 1 1 11 0M10.500 17a5 5 0 1 1 7 0"/></g><circle cx="14" cy="12.500" r="2.300" fill="#fff"/><path d="M12 16.500h4l-.7 7h-2.600z" fill="#fff"/></svg></a>
  <a href="#" aria-label="Apple TV"><svg width="28" height="28" viewBox="0 0 28 28"><circle cx="14" cy="14" r="13.800" fill="#161616"/><path d="M8 9.500c.6-.2 2.700-.3 3.300.8-1.500.9-1.300 3 .3 3.600-.5 1.600-1.400 2.800-2.300 2.600-.7-.3-1.200-.3-1.900 0C5.800 17 4 14 4.300 12c.3-2.200 2-3 3.700-2.500zM7.700 9c0-1.300.7-2.100 1.900-2.400C9.700 8 9 9 7.700 9z" fill="#fff"/><text x="13" y="17" font-size="11" font-weight="500" fill="#fff">tv</text></svg></a>
  <a href="#" aria-label="App Store"><svg width="31" height="28" viewBox="-1 0 31 28"><circle cx="14" cy="14" r="13.800" fill="url(#gBlue)"/><path d="M14.500 7L8.500 19.500M13 7l6.500 13M6 17h16" stroke="#fff" stroke-width="2.300" stroke-linecap="round"/><circle cx="24" cy="4" r="6" fill="#f23c3c"/><text x="21.500" y="7.500" font-size="9" fill="#fff">3</text></svg></a>
  <a href="#" aria-label="System Preferences"><svg width="28" height="28" viewBox="0 0 28 28"><rect x="0" y="1" width="28" height="26" rx="1" fill="#8f9598"/><circle cx="14" cy="14" r="11" fill="#3a3a3c"/><circle cx="14" cy="14" r="9" fill="none" stroke="#aaa" stroke-width="2.500" stroke-dasharray="1.500 1"/><circle cx="14" cy="14" r="6.500" fill="#353537" stroke="#999"/><path d="M14 14L21 14M14 14l-4 6M14 14l-4-6" stroke="#aaa" stroke-width="1.600"/><circle cx="14" cy="14" r="2" fill="#888"/></svg></a>
  <a href="#" aria-label="Messages"><svg width="28" height="28" viewBox="0 0 28 28"><path d="M13 1C5.500 1 0 6 0 12c0 4 2 7 5 9l-1 5 6-3c9 1.500 16-4 16-11C26 6 20.500 1 13 1z" fill="url(#gBlue)"/><path d="M19.500 12c-5 0-8 3-8 6.500s3 6.500 7 6.500l5 2-.5-3c2.500-1 4-3 4-5.500 0-3.500-3-6.500-7.500-6.500z" fill="#eef3f8"/><path d="M15.500 19h1.500M19 19h1.500M22.500 19h1.500" stroke="#35689c" stroke-width="2"/></svg></a>
  <a href="#" aria-label="Calendar"><svg width="28" height="28" viewBox="0 0 28 28"><g transform="rotate(-7 14 14)"><path d="M3 2h22v25H3z" fill="#f8f8f8"/><path d="M3 2h22v7H3z" fill="#e2463f"/><text x="9" y="8" font-size="6" font-weight="500" fill="#fff">APR</text><text x="10" y="22" font-size="13" fill="#333">6</text></g></svg></a>
  <i class="bar"></i>
  <a href="#" class="open" aria-label="Webex"><svg width="28" height="28" viewBox="0 0 28 28"><circle cx="14" cy="14" r="13.800" fill="#f3f6f7"/><circle cx="14" cy="14" r="10.500" fill="#fff" stroke="#1d6f92" stroke-width="4"/><path d="M4 10a10.500 10.500 0 0 1 17-4" fill="none" stroke="#30b6d5" stroke-width="4"/><path d="M20 7c1 8-4 12-11 13 6 4 13 0 13-7z" fill="#6cc04a"/></svg></a>
  <a href="#" class="open" aria-label="Preview"><svg width="28" height="28" viewBox="0 0 28 28"><g transform="rotate(-7 14 14)"><path d="M4 2h23v18H4z" fill="#c9a777"/><path d="M1 7h22v17H1z" fill="#f3f3f0"/><path d="M2.500 8.500h19v7h-19z" fill="#3d7fc6"/><path d="M2.500 15.500h19v7h-19z" fill="#a9c3d8"/><path d="M3 21l9-4 9 5z" fill="#c9b891"/></g><circle cx="22" cy="18" r="5.500" fill="#8a96a4" fill-opacity=".6" stroke="#444" stroke-width="1.500"/><path d="M18 23l-3 4" stroke="#333" stroke-width="2"/></svg></a>
  <i class="bar"></i>
  <a href="#" aria-label="Minimised window"><svg width="31" height="28" viewBox="0 0 31 28"><path d="M0 6h31v18H0z" fill="#f1f1f1"/><path d="M0 6h31v2H0z" fill="#b8b8b8"/><path d="M0 8h5v16H0z" fill="#222"/><path d="M1 10h3v2.500H1zM1 15h3v2.500H1zM1 20h3v2.500H1z" fill="#ddd"/><path d="M11 10h8M11 12h12M11 14h12M11 16h9M11 18h11" stroke="#b8c7d8" stroke-width=".8"/><path d="M20 20h10v7H20z" fill="#4a83bd"/><path d="M20 24h10v3H20z" fill="#cdb991"/></svg></a>
  <a href="#" aria-label="Trash"><svg width="28" height="28" viewBox="0 0 28 28"><path d="M3 4h22l-3 23c-1 2-15 2-16 0z" fill="url(#gTrash)"/><ellipse cx="14" cy="4" rx="11" ry="3" fill="#5d5d5d" stroke="#bbb"/><path d="M5 5l3-4 4 1 3-2 4 2 3-1 1 4-4 2-7-1z" fill="#d3d8da"/><path d="M8 2l2 3M14 1l1 4M20 2l-3 3" stroke="#5a7f98"/><path d="M9 9l1.500 17M14 9v18M19 9l-1.500 17" stroke="#777" stroke-width=".7"/></svg></a>
</nav>

<script>
const columns = ['A','B','C','D','E','F','G','H','I','J','K','L','M'];
// row number, label, value, unit, fill: the same property list feeds both solver blocks
const properties = [
  [110,'T','333.15','K','yel'],[111,'V','5.00E-02','m^3/mol','yel'],[112,'mf1','2.37E-01','','yel'],
  [113,'Tc1','547.9','K','yel'],[114,'Pc1','4.83E+06','Pa','yel'],[115,'w1','0.278','','yel'],
  [116,'Tc2','562','K','yel'],[117,'Pc2','4.50E+06','Pa','yel'],[118,'w2','0.59','','yel'],[119,'K12','0','','yel'],
  [120,'ac1','1.963270706','Pa-m^6/(mol^2)','red'],[121,'kappa1','0.782526855','','red'],[122,'alpha1','1.374362424','','red'],
  [123,'a11','2.698245486','Pa-m^6/(mol^2)','red'],[124,'b11','7.33297E-05','m^3/mol','red'],[125,'ac2','2.22E+00','Pa-m^6/(mol^2)','red'],
  [126,'kappa2','1.190610071','','red'],[127,'alpha2','1.622878752','','red'],[128,'a22','3.600466078','Pa-m^6/(mol^2)','red'],
  [129,'b22','8.08E-05','m^3/mol','red'],[130,'a12','3.12E+00','Pa-m^6/(mol^2)','red'],[131,'b12','7.71E-05','m^3/mol','red'],
  [132,'a','3.37E+00','Pa-m^6/(mol^2)',''],[133,'b','7.90E-05','m^3/mol','']
];
const cells = {};
const put = (ref, text, style = '') => { cells[ref] = { text, style }; };
for (const [n, label, value, unit, fill] of properties) {
  const spill = unit.length > 10 ? 'spill' : '';
  put('A' + n, label); put('B' + n, value, 'num ' + fill); put('C' + n, unit, spill);
  put('G' + n, label); put('H' + n, value, 'num ' + fill); put('I' + n, unit, spill);
}
put('K107', 'w'); put('L107', 'accentric factor'); put('M107', 'c');
put('A108', 'Solve for Pressure', 't1 b1'); put('B108', '', 't1 b1 r2');
put('G108', 'Solve for Z', 't1 b1 l1'); put('H108', '', 't1 b1 r2');
put('B110', '333.15', 'num yel t1 b1 l1 r2'); put('B111', '5.00E-02', 'num yel b1 l1 r2');
put('H110', '3.33E+02', 'num yel t1 b1 l1 r2'); put('H111', '3.11E+07', 'num yel b1 l1 r2');
put('G111', 'P'); put('I111', 'Pa');
put('K109', 'Cubic', 'fw-bold'); put('L109', '\u00a0alpha*Z^3 + beta*Z^2 + gamma*Z + delta', 'spill');
put('K110', 'alpha'); put('L110', '1.00E+00', 'num red');
put('K111', 'beta'); put('L111', '-0.112791047', 'num red');
put('K112', 'gamma'); put('L112', '9.543978109', 'num red');
put('K113', 'delta'); put('L113', '-10.65135737', 'num red');
for (let n = 115; n < 120; n++) put('L' + n, '', 'red');
put('K120', 'A'); put('L120', '13.67981519', 'num red');
put('K121', 'B'); put('L121', '0.887208953', 'num red');
put('A135', 'P'); put('B135', '5.44E+04', 'num grn t2 b1 l1 r2'); put('C135', 'Pa');
put('A136', 'Z'); put('B136', '0.9821', 'num grn b2 l1 r2');
put('G135', 'Z1'); put('H135', '1.01780', 'num grn t2 b1 l1 r2');
put('G136', 'Z2'); put('H136', '0.00000', 'num grn b1 l1 r2');
put('G137', 'Z3'); put('H137', '0.00000', 'num grn b1 l1 r2');
put('K135', 'V1(Z1)'); put('L135', '9.0650E-05', 'num grn t1 l1 r1 mid'); put('M135', 'm^3/mol');
put('K136', 'V2(Z2)'); put('L136', '0.0000E+00', 'num grn b1 l1 r1'); put('M136', 'm^3/mol');
put('K137', 'V3(Z3)'); put('L137', '0.0000E+00', 'num grn b1 l1 r1'); put('M137', 'm^3/mol');
put('A138', 'A'); put('B138', '0.018198045', 'num red');
put('G138', '# of real roots'); put('H138', '1', 'num grn b1 l1 r2');

const body = document.getElementById('rows');
for (let n = 107; n <= 138; n++) {
  const row = body.insertRow();
  if (n === 107) row.classList.add('cut');
  if ([114, 119, 124, 129].includes(n)) row.classList.add('short');
  if ([135, 136].includes(n)) row.classList.add('tall');
  if ([112, 117, 122, 127, 132, 135].includes(n)) row.classList.add('faint');
  const head = document.createElement('th');
  head.scope = 'row';
  if (n === 119) head.className = 'active';
  row.append(head);
  const fill = (cell, text) => {
    if (n === 107 && text) { const d = document.createElement('div'); d.textContent = text; cell.append(d); }
    else cell.textContent = text;
  };
  fill(head, String(n));
  for (const c of columns) {
    const cell = row.insertCell(), data = cells[c + n];
    if (data) { cell.className = data.style; fill(cell, data.text); }
  }
}
</script>
<script src="https://cdn.jsdelivr.net/npm/bootstrap@5.3.0/dist/js/bootstrap.bundle.min.js"></script>
</body>
</html>
